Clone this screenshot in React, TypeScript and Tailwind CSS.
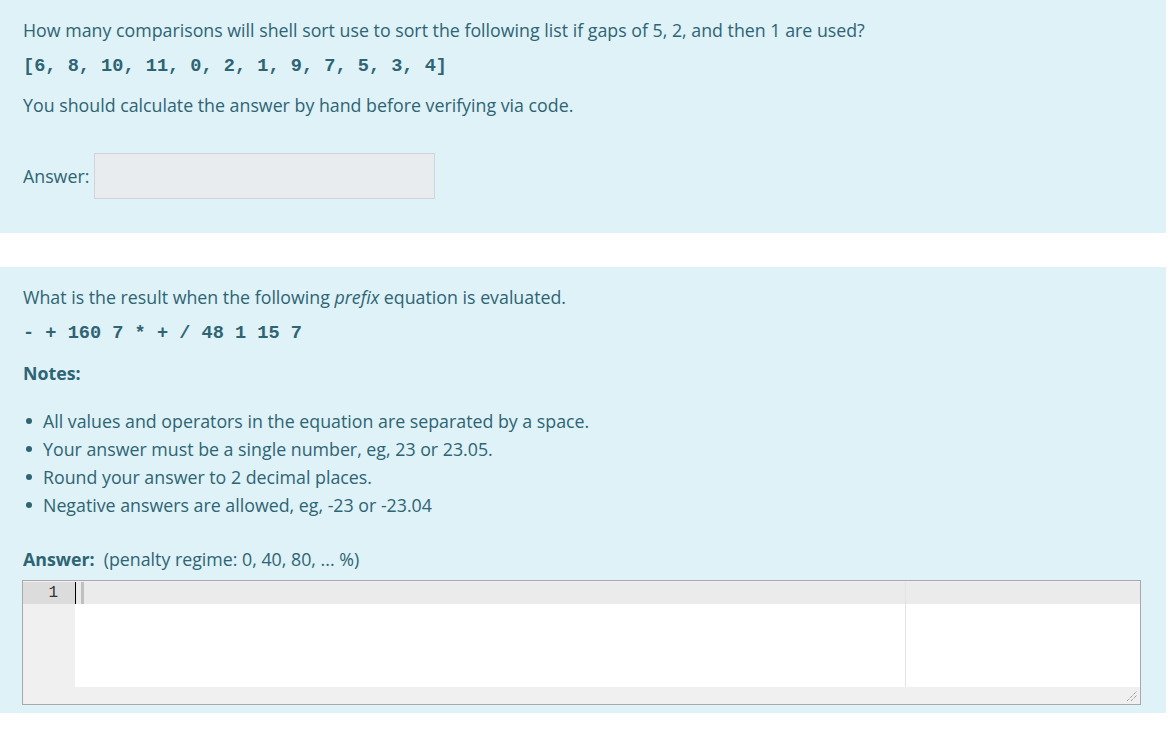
import React from "react";

const sans = { fontFamily: '"Open Sans", "Noto Sans", sans-serif' };

function Bullet({ children }: { children: React.ReactNode }) {
  return (
    <div className="flex items-center h-[28px]">
      <span className="w-[20px] flex items-center pl-[3px] shrink-0">
        <span className="block w-[6px] h-[6px] rounded-full bg-[#2f6473]" />
      </span>
      <span>{children}</span>
    </div>
  );
}

export default function App() {
  return (
    <div
      className="w-[1168px] h-[751px] bg-white text-[#2f6473] text-[17.8px] overflow-hidden"
      style={sans}
    >
      {/* Question 1 */}
      <div className="w-[1166px] h-[233px] bg-[#def2f8] pl-[23px] pt-[16px]">
        <div className="h-[28px] leading-[28px]">
          How many comparisons will shell sort use to sort the following list if gaps of 5, 2, and then 1 are used?
        </div>
        <div className="mt-[9px] h-[28px] leading-[28px] font-['Liberation_Mono',monospace] text-[18.6px] font-bold whitespace-pre">
          [6, 8, 10, 11, 0, 2, 1, 9, 7, 5, 3, 4]
        </div>
        <div className="mt-[10px] h-[28px] leading-[28px]">
          You should calculate the answer by hand before verifying via code.
        </div>
        <div className="mt-[34px] flex items-center h-[46px]">
          <span className="mr-[5px]">Answer:</span>
          <div className="w-[341px] h-[46px] bg-[#e9ecef] border border-[#ced4da]" />
        </div>
      </div>

      {/* gap */}
      <div className="h-[34px]" />

      {/* Question 2 */}
      <div className="w-[1166px] h-[446px] bg-[#def2f8] pl-[23px] pr-[25px] pt-[16px]">
        <div className="h-[28px] leading-[28px]">
          What is the result when the following <em>prefix</em> equation is evaluated.
        </div>
        <div className="mt-[9px] h-[28px] leading-[28px] font-['Liberation_Mono',monospace] text-[18.6px] font-bold whitespace-pre">
          - + 160 7 * + / 48 1 15 7
        </div>
        <div className="mt-[11px] h-[28px] leading-[28px] font-bold">Notes:</div>
        <div className="mt-[20px]">
          <Bullet>All values and operators in the equation are separated by a space.</Bullet>
          <Bullet>Your answer must be a single number, eg, 23 or 23.05.</Bullet>
          <Bullet>Round your answer to 2 decimal places.</Bullet>
          <Bullet>Negative answers are allowed, eg, -23 or -23.04</Bullet>
        </div>
        <div className="mt-[26px] h-[28px] leading-[28px] flex">
          <span className="font-bold">Answer:</span>
          <span className="ml-[9px]">(penalty regime: 0, 40, 80, ... %)</span>
        </div>

        {/* Code editor */}
        <div className="mt-[7px] -ml-[1px] w-[1119px] h-[125px] border border-[#a9a9a9] bg-[#f0f0f0] flex flex-col">
          <div className="flex flex-1 pt-[1px]">
            {/* gutter */}
            <div className="w-[52px] flex flex-col">
              <div className="h-[22px] bg-[#dcdcdc] text-right pr-[17px] text-[#333] text-[16px] leading-[22px] font-['Liberation_Mono',monospace]">
                1
              </div>
              <div className="flex-1 bg-[#f0f0f0]" />
            </div>
            {/* content */}
            <div className="flex-1 flex flex-col relative">
              <div className="h-[22px] bg-[#ebebeb] flex">
                <div className="w-[1px] h-full bg-black" />
                <div className="w-[5px]" />
                <div className="w-[3px] h-full bg-[#c0c0c0]" />
              </div>
              <div className="flex-1 bg-white" />
              <div className="absolute left-[830px] top-0 bottom-0 w-[1px] bg-[#e3e3e3]" />
            </div>
          </div>
          <div className="h-[17px] flex justify-end items-end pr-[2px] pb-[2px]">
            <svg width="12" height="12" viewBox="0 0 12 12">
              <line x1="1" y1="11" x2="11" y2="1" stroke="#777" strokeWidth="1" strokeDasharray="1 1" />
              <line x1="5" y1="11" x2="11" y2="5" stroke="#777" strokeWidth="1" strokeDasharray="1 1" />
            </svg>
          </div>
        </div>
      </div>
    </div>
  );
}
